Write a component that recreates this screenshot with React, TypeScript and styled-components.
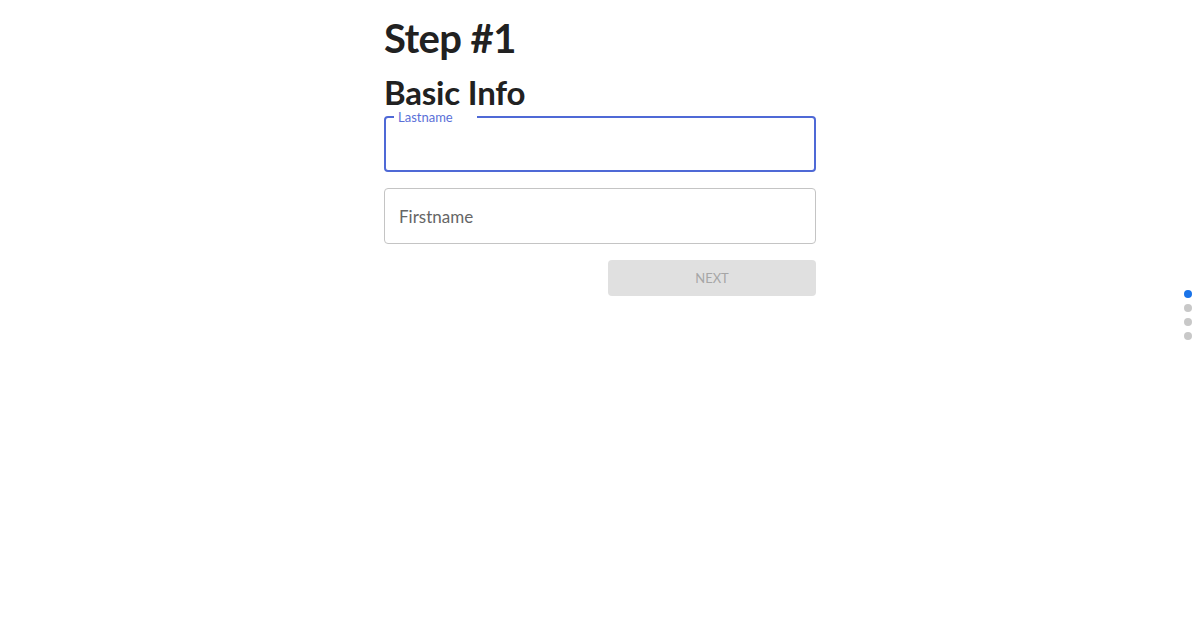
import styled, { createGlobalStyle } from "styled-components"

const GlobalStyle = createGlobalStyle`
  body {
    margin: 0;
    background: #FFFFFF;
    font-family: "Lato", "Noto Sans", sans-serif;
    color: #212121;
  }
`

const Page = styled.main`
  width: 432px;
  margin: 0 auto;
  padding-top: 14px;
`

const Title = styled.h1`
  margin: 0;
  font-size: 40px;
  line-height: 48px;
  font-weight: 700;
  letter-spacing: -0.6px;
`

const Subtitle = styled.h2`
  margin: 14px 0 0;
  font-size: 33px;
  line-height: 32px;
  font-weight: 700;
  letter-spacing: -0.2px;
`

const Form = styled.form`
  display: flex;
  flex-direction: column;
  gap: 16px;
  margin-top: 9px;
`

const FocusedField = styled.fieldset`
  margin: -7px 0 0;
  padding: 0 8px;
  height: 62px;
  box-sizing: border-box;
  border: 2px solid #4F69D6;
  border-radius: 4px;
`

const Legend = styled.legend`
  padding: 0 24px 0 4px;
  font-size: 13px;
  line-height: 14px;
  color: #5A6FD8;
`

const Field = styled.div`
  height: 56px;
  box-sizing: border-box;
  padding: 0 14px;
  border: 1px solid #C4C4C4;
  border-radius: 4px;
  display: flex;
  align-items: center;
`

const Placeholder = styled.span`
  font-size: 17px;
  color: #666666;
`

const Actions = styled.div`
  display: flex;
  justify-content: flex-end;
`

const NextButton = styled.button`
  width: 208px;
  height: 36px;
  border: none;
  border-radius: 4px;
  background: #E0E0E0;
  color: #A6A6A6;
  font-family: inherit;
  font-size: 13px;
  text-transform: uppercase;
`

const Dots = styled.nav`
  position: fixed;
  right: 8px;
  top: 290px;
  display: flex;
  flex-direction: column;
  gap: 6px;
`

const Dot = styled.span<{ $active?: boolean }>`
  width: 8px;
  height: 8px;
  border-radius: 50%;
  background: ${p => (p.$active ? "#1A73E8" : "#C8C8C8")};
`

export default function App() {
  return (
    <>
      <GlobalStyle />
      <Page>
        <Title>Step #1</Title>
        <Subtitle>Basic Info</Subtitle>
        <Form>
          <FocusedField>
            <Legend>Lastname</Legend>
          </FocusedField>
          <Field>
            <Placeholder>Firstname</Placeholder>
          </Field>
          <Actions>
            <NextButton type="button" disabled>Next</NextButton>
          </Actions>
        </Form>
      </Page>
      <Dots>
        <Dot $active />
        <Dot />
        <Dot />
        <Dot />
      </Dots>
    </>
  )
}
